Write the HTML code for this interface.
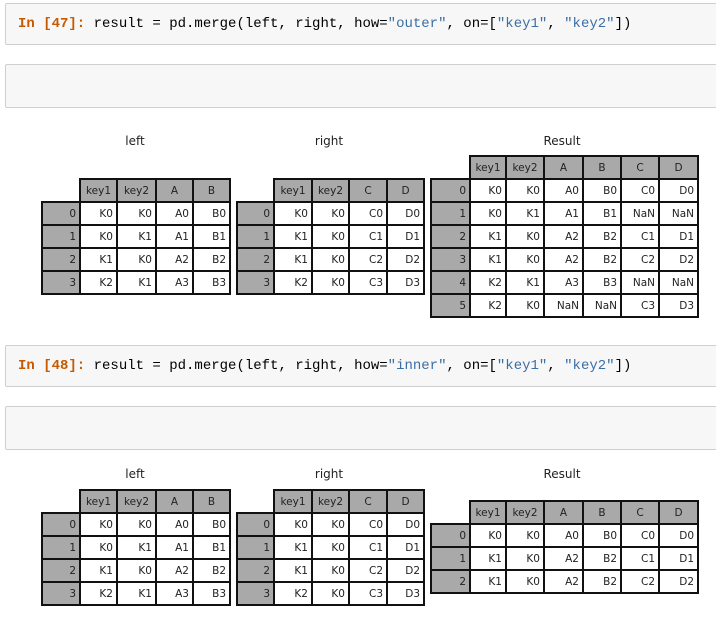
<!DOCTYPE html>
<html><head><meta charset="utf-8"><style>
body{margin:0;width:716px;height:625px;background:#fff;position:relative;overflow:hidden;font-family:"DejaVu Sans","Liberation Sans",sans-serif}
.cell{position:absolute;left:5px;width:740px;background:#f7f7f7;border:1px solid #cfcfcf;border-radius:2px;box-sizing:border-box}
.code{position:absolute;left:18px;font-family:"Liberation Mono","DejaVu Sans Mono",monospace;font-size:14px;color:#000;white-space:pre}
.p{color:#c55a00;font-weight:bold}
.s{color:#3a6ea5}
.t{position:absolute;font-size:12px;color:#222;transform:translateX(-50%)}
table{position:absolute;border-collapse:collapse;table-layout:fixed;font-size:10.5px;color:#222}
td{height:21px;padding:0 3px 0 0;border:2px solid #111;text-align:right;background:#fff;overflow:hidden;white-space:nowrap}
td.h{background:#a9a9a9;text-align:center;padding:0}
td.i{background:#a9a9a9}
td.e{border:none;background:transparent}
</style></head><body>

<div class="cell" style="top:3px;height:42px"></div>
<div class="code" style="top:16px"><span class="p">In [47]:</span> result = pd.merge(left, right, how=<span class="s">"outer"</span>, on=[<span class="s">"key1"</span>, <span class="s">"key2"</span>])</div>
<div class="cell" style="top:64px;height:44px"></div>

<div class="t" style="left:135px;top:134px">left</div>
<div class="t" style="left:329px;top:134px">right</div>
<div class="t" style="left:562px;top:134px">Result</div>

<table style="left:41px;top:178px;width:190px">
<colgroup><col style="width:38px"><col style="width:37px"><col style="width:39px"><col style="width:37px"><col style="width:37px"></colgroup>
<tr><td class="e"></td><td class="h">key1</td><td class="h">key2</td><td class="h">A</td><td class="h">B</td></tr>
<tr><td class="i">0</td><td>K0</td><td>K0</td><td>A0</td><td>B0</td></tr>
<tr><td class="i">1</td><td>K0</td><td>K1</td><td>A1</td><td>B1</td></tr>
<tr><td class="i">2</td><td>K1</td><td>K0</td><td>A2</td><td>B2</td></tr>
<tr><td class="i">3</td><td>K2</td><td>K1</td><td>A3</td><td>B3</td></tr>
</table>

<table style="left:236px;top:178px;width:188px">
<colgroup><col style="width:37px"><col style="width:38px"><col style="width:37px"><col style="width:38px"><col style="width:37px"></colgroup>
<tr><td class="e"></td><td class="h">key1</td><td class="h">key2</td><td class="h">C</td><td class="h">D</td></tr>
<tr><td class="i">0</td><td>K0</td><td>K0</td><td>C0</td><td>D0</td></tr>
<tr><td class="i">1</td><td>K1</td><td>K0</td><td>C1</td><td>D1</td></tr>
<tr><td class="i">2</td><td>K1</td><td>K0</td><td>C2</td><td>D2</td></tr>
<tr><td class="i">3</td><td>K2</td><td>K0</td><td>C3</td><td>D3</td></tr>
</table>

<table style="left:430px;top:155px;width:268px">
<colgroup><col style="width:39px"><col style="width:36px"><col style="width:38px"><col style="width:39px"><col style="width:38px"><col style="width:38px"><col style="width:39px"></colgroup>
<tr><td class="e"></td><td class="h">key1</td><td class="h">key2</td><td class="h">A</td><td class="h">B</td><td class="h">C</td><td class="h">D</td></tr>
<tr><td class="i">0</td><td>K0</td><td>K0</td><td>A0</td><td>B0</td><td>C0</td><td>D0</td></tr>
<tr><td class="i">1</td><td>K0</td><td>K1</td><td>A1</td><td>B1</td><td>NaN</td><td>NaN</td></tr>
<tr><td class="i">2</td><td>K1</td><td>K0</td><td>A2</td><td>B2</td><td>C1</td><td>D1</td></tr>
<tr><td class="i">3</td><td>K1</td><td>K0</td><td>A2</td><td>B2</td><td>C2</td><td>D2</td></tr>
<tr><td class="i">4</td><td>K2</td><td>K1</td><td>A3</td><td>B3</td><td>NaN</td><td>NaN</td></tr>
<tr><td class="i">5</td><td>K2</td><td>K0</td><td>NaN</td><td>NaN</td><td>C3</td><td>D3</td></tr>
</table>

<div class="cell" style="top:345px;height:42px"></div>
<div class="code" style="top:358px"><span class="p">In [48]:</span> result = pd.merge(left, right, how=<span class="s">"inner"</span>, on=[<span class="s">"key1"</span>, <span class="s">"key2"</span>])</div>
<div class="cell" style="top:406px;height:44px"></div>

<div class="t" style="left:135px;top:467px">left</div>
<div class="t" style="left:329px;top:467px">right</div>
<div class="t" style="left:562px;top:467px">Result</div>

<table style="left:41px;top:489px;width:190px">
<colgroup><col style="width:38px"><col style="width:37px"><col style="width:39px"><col style="width:37px"><col style="width:37px"></colgroup>
<tr><td class="e"></td><td class="h">key1</td><td class="h">key2</td><td class="h">A</td><td class="h">B</td></tr>
<tr><td class="i">0</td><td>K0</td><td>K0</td><td>A0</td><td>B0</td></tr>
<tr><td class="i">1</td><td>K0</td><td>K1</td><td>A1</td><td>B1</td></tr>
<tr><td class="i">2</td><td>K1</td><td>K0</td><td>A2</td><td>B2</td></tr>
<tr><td class="i">3</td><td>K2</td><td>K1</td><td>A3</td><td>B3</td></tr>
</table>

<table style="left:236px;top:489px;width:188px">
<colgroup><col style="width:37px"><col style="width:38px"><col style="width:37px"><col style="width:38px"><col style="width:37px"></colgroup>
<tr><td class="e"></td><td class="h">key1</td><td class="h">key2</td><td class="h">C</td><td class="h">D</td></tr>
<tr><td class="i">0</td><td>K0</td><td>K0</td><td>C0</td><td>D0</td></tr>
<tr><td class="i">1</td><td>K1</td><td>K0</td><td>C1</td><td>D1</td></tr>
<tr><td class="i">2</td><td>K1</td><td>K0</td><td>C2</td><td>D2</td></tr>
<tr><td class="i">3</td><td>K2</td><td>K0</td><td>C3</td><td>D3</td></tr>
</table>

<table style="left:430px;top:500px;width:268px">
<colgroup><col style="width:39px"><col style="width:36px"><col style="width:38px"><col style="width:39px"><col style="width:38px"><col style="width:38px"><col style="width:39px"></colgroup>
<tr><td class="e"></td><td class="h">key1</td><td class="h">key2</td><td class="h">A</td><td class="h">B</td><td class="h">C</td><td class="h">D</td></tr>
<tr><td class="i">0</td><td>K0</td><td>K0</td><td>A0</td><td>B0</td><td>C0</td><td>D0</td></tr>
<tr><td class="i">1</td><td>K1</td><td>K0</td><td>A2</td><td>B2</td><td>C1</td><td>D1</td></tr>
<tr><td class="i">2</td><td>K1</td><td>K0</td><td>A2</td><td>B2</td><td>C2</td><td>D2</td></tr>
</table>

</body></html>
